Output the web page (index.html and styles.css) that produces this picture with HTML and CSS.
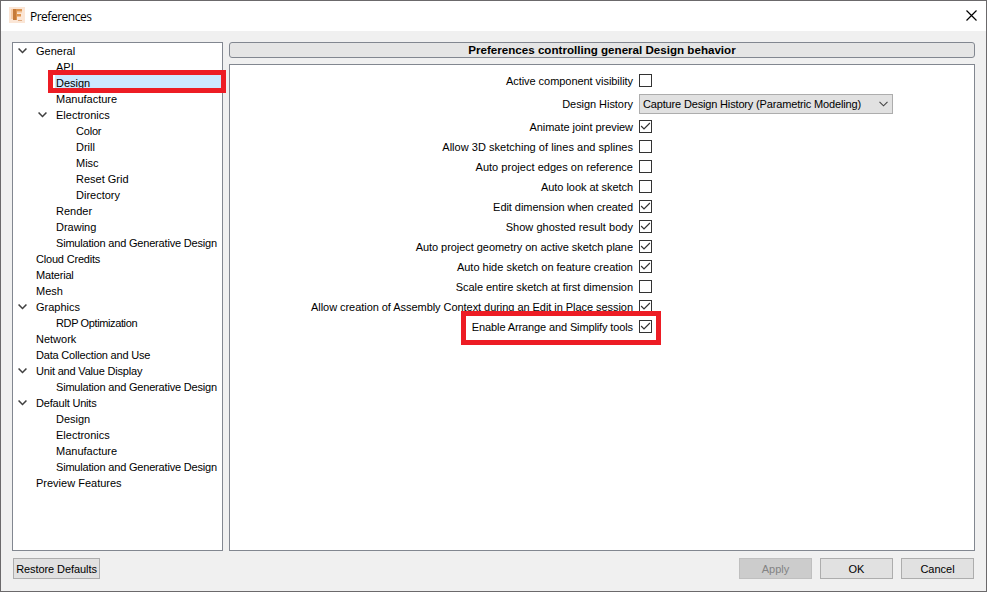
FILE: index.html
```html
<!DOCTYPE html>
<html lang="en">
<head>
    <meta charset="UTF-8">
    <title>Preferences</title>
    <link rel="stylesheet" href="styles.css">
</head>
<body>

<div class="window">
    <div class="titlebar">
        <svg class="logo" width="16" height="16" viewBox="0 0 16 16">
            <rect width="16" height="16" fill="#fbe6d6"/>
            <path d="M2 2h3v10H2z" fill="#f6cba6"/>
            <path d="M4 2h9v2.5H8V7h4v2H8v4H4z" fill="#dc9450"/>
            <path d="M4 2h3v11H4z" fill="#c57a3a"/>
            <path d="M8 4.5h5v1H8zM8 9h4v1H8z" fill="#f3bb8a"/>
            <path d="M9 13h4v1H9z" fill="#e0ab80"/>
        </svg>
        <span class="title">Preferences</span>
        <svg class="close" width="11" height="11" viewBox="0 0 11 11">
            <path d="M.5 .5l10 10M10.5 .5l-10 10" stroke="#000" stroke-width="1.2"/>
        </svg>
    </div>

    <div class="content">
        <!-- Category tree -->
        <ul class="tree">
            <li class="open">General</li>
            <li class="l2">API</li>
            <li class="l2 selected">Design<i class="mark"></i></li>
            <li class="l2">Manufacture</li>
            <li class="l2 open">Electronics</li>
            <li class="l3 tight">Color</li>
            <li class="l3">Drill</li>
            <li class="l3">Misc</li>
            <li class="l3">Reset Grid</li>
            <li class="l3">Directory</li>
            <li class="l2">Render</li>
            <li class="l2">Drawing</li>
            <li class="l2 tight">Simulation and Generative Design</li>
            <li class="tight">Cloud Credits</li>
            <li class="tight">Material</li>
            <li>Mesh</li>
            <li class="open">Graphics</li>
            <li class="l2 tighter">RDP Optimization</li>
            <li>Network</li>
            <li class="tight">Data Collection and Use</li>
            <li class="open tight">Unit and Value Display</li>
            <li class="l2 tight">Simulation and Generative Design</li>
            <li class="open tight">Default Units</li>
            <li class="l2">Design</li>
            <li class="l2">Electronics</li>
            <li class="l2">Manufacture</li>
            <li class="l2 tight">Simulation and Generative Design</li>
            <li>Preview Features</li>
        </ul>

        <div class="main">
            <div class="heading">Preferences controlling general Design behavior</div>

            <form class="panel">
                <label class="row"><span>Active component visibility</span><input type="checkbox"></label>
                <div class="row history">
                    <span>Design History</span>
                    <div class="combo">
                        Capture Design History (Parametric Modeling)
                        <svg width="9" height="6" viewBox="0 0 9 6"><path d="M.5 .8l4 4 4-4" fill="none" stroke="#444" stroke-width="1.1"/></svg>
                    </div>
                </div>
                <label class="row"><span>Animate joint preview</span><input type="checkbox" checked></label>
                <label class="row"><span class="loose">Allow 3D sketching of lines and splines</span><input type="checkbox"></label>
                <label class="row"><span class="loose">Auto project edges on reference</span><input type="checkbox"></label>
                <label class="row"><span>Auto look at sketch</span><input type="checkbox"></label>
                <label class="row"><span>Edit dimension when created</span><input type="checkbox" checked></label>
                <label class="row"><span class="loose">Show ghosted result body</span><input type="checkbox" checked></label>
                <label class="row"><span>Auto project geometry on active sketch plane</span><input type="checkbox" checked></label>
                <label class="row"><span class="even">Auto hide sketch on feature creation</span><input type="checkbox" checked></label>
                <label class="row"><span>Scale entire sketch at first dimension</span><input type="checkbox"></label>
                <label class="row"><span>Allow creation of Assembly Context during an Edit in Place session</span><input type="checkbox" checked></label>
                <label class="row"><span class="narrow">Enable Arrange and Simplify tools</span><input type="checkbox" checked><i class="mark"></i></label>
            </form>
        </div>
    </div>

    <div class="footer">
        <button class="restore">Restore Defaults</button>
        <button disabled>Apply</button>
        <button>OK</button>
        <button>Cancel</button>
    </div>
</div>

</body>
</html>
```

FILE: styles.css
```css
* {
    box-sizing: border-box;
}

body {
    margin: 0;
    font-family: "Liberation Sans", Arial, sans-serif;
    font-size: 11px;
    color: #000;
}

.window {
    display: flex;
    flex-direction: column;
    width: 987px;
    height: 592px;
    border: 1px solid #6b696b;
    background-color: #f0f0f0;
}

/* Title bar */
.titlebar {
    display: flex;
    align-items: center;
    height: 30px;
    padding: 0 9px 0 8px;
    background-color: #fff;
}

.logo {
    margin-top: -2px;
}

.title {
    margin-left: 5px;
    font-family: "Open Sans", sans-serif;
    font-size: 12px;
    letter-spacing: -0.5px;
}

.close {
    margin: -2px 0 0 auto;
}

.content {
    display: flex;
    gap: 6px;
    height: 509px;
    margin: 11px 11px 0;
}

/* Tree */
.tree {
    width: 211px;
    margin: 0;
    padding: 0;
    border: 1px solid #828790;
    background-color: #fff;
    list-style: none;
}

.tree li {
    position: relative;
    height: 16px;
    padding-left: 23px;
    line-height: 16px;
    white-space: nowrap;
}

.tree .l2 {
    padding-left: 43px;
}

.tree .l3 {
    padding-left: 63px;
}

.tree .tight {
    letter-spacing: -0.19px;
}

.tree .tighter {
    letter-spacing: -0.38px;
}

.tree .open::before {
    content: "";
    position: absolute;
    top: 5px;
    left: 5px;
    width: 9px;
    height: 6px;
    background-color: #404040;
    clip-path: polygon(0 1.1px, 1.1px 0, 4.5px 3.4px, 7.9px 0, 9px 1.1px, 4.5px 5.6px);
}

.tree .l2.open::before {
    left: 25px;
}

.tree .selected {
    background: linear-gradient(#cce8ff, #cce8ff) no-repeat 42px 0;
}

/* Red highlight frames */
.mark {
    position: absolute;
    z-index: 1;
    border: 5px solid #ed1c24;
}

.tree .mark {
    top: -5px;
    left: 35px;
    width: 178px;
    height: 23px;
}

.row .mark {
    top: -6px;
    left: 231px;
    width: 200px;
    height: 34px;
}

/* Settings panel */
.main {
    display: flex;
    flex-direction: column;
    gap: 6px;
    width: 746px;
}

.heading {
    height: 16px;
    border: 1px solid #828790;
    border-radius: 3px;
    background-color: #e5e5e5;
    font-size: 11.6px;
    font-weight: bold;
    line-height: 14px;
    text-align: center;
}

.panel {
    flex: 1;
    padding-top: 6px;
    border: 1px solid #828790;
    background-color: #fff;
}

.row {
    position: relative;
    display: grid;
    grid-template-columns: 403px auto;
    justify-content: start;
    align-items: start;
    column-gap: 6px;
    height: 20px;
    line-height: 20px;
    white-space: nowrap;
}

.row span {
    letter-spacing: -0.05px;
    text-align: right;
}

.row .loose {
    letter-spacing: 0.03px;
}

.row .even {
    letter-spacing: 0;
}

.row .narrow {
    letter-spacing: -0.12px;
}

.history {
    height: 26px;
    line-height: 26px;
}

input[type="checkbox"] {
    appearance: none;
    width: 13px;
    height: 13px;
    margin: 3px 0 0;
    border: 1px solid #333;
    background-color: #fff;
}

input[type="checkbox"]:checked::before {
    content: "";
    display: block;
    width: 11px;
    height: 11px;
    background-color: #333;
    clip-path: polygon(0.7px 5.4px, 1.5px 4.6px, 4px 7.1px, 9.5px 1.6px, 10.3px 2.4px, 4px 8.7px);
}

.combo {
    display: flex;
    align-items: center;
    justify-content: space-between;
    width: 254px;
    height: 20px;
    margin-top: 3px;
    padding: 0 4px 0 3px;
    border: 1px solid #adadad;
    background-color: #e1e1e1;
    letter-spacing: -0.16px;
    line-height: 18px;
}

/* Buttons */
.footer {
    display: flex;
    gap: 8px;
    margin: 7px 12px 0;
}

button {
    width: 73px;
    height: 21px;
    padding: 1px 0 0;
    border: 1px solid #adadad;
    background-color: #e1e1e1;
    color: #000;
    font-family: inherit;
    font-size: 11px;
    line-height: 18px;
}

button:disabled {
    border-color: #bfbfbf;
    background-color: #ccc;
    color: #838383;
}

.restore {
    width: 87px;
    margin-right: auto;
    letter-spacing: -0.08px;
}
```
